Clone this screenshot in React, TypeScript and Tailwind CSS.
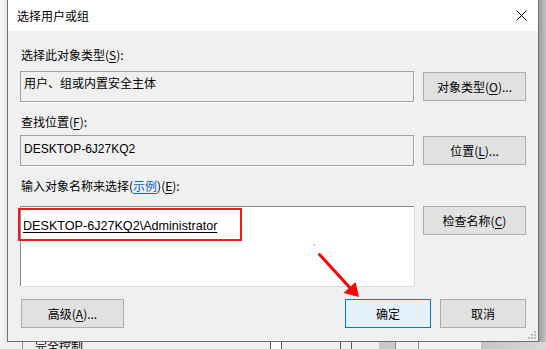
import React from 'react'

const cjk = '"Noto Sans CJK SC", "Noto Sans", sans-serif'
const latin = '"Liberation Sans", "Noto Sans CJK SC", sans-serif'

function Key({ children }: { children: React.ReactNode }) {
  return <span className="underline underline-offset-2">{children}</span>
}

function WinButton({ children, width, primary }: { children: React.ReactNode; width: string; primary?: boolean }) {
  return (
    <div
      className={`flex h-[29px] shrink-0 items-center justify-center border text-[12px] text-black ${width} ${
        primary ? 'border-[#0078d7] bg-[#e5f1fb]' : 'border-[#adadad] bg-[#e1e1e1]'
      }`}
    >
      {children}
    </div>
  )
}

function ReadOnlyBox({ children, top }: { children: React.ReactNode; top: string }) {
  return (
    <div
      className={`h-[31px] w-[394px] border border-[#a0a0a0] bg-[#f0f0f0] pl-[3px] text-[12px] leading-[16px] text-black shadow-[1px_1px_0_#ffffff] ${top}`}
    >
      {children}
    </div>
  )
}

export default function App() {
  return (
    <div className="flex h-[349px] w-[546px] flex-col overflow-hidden bg-[#f0f0f0]" style={{ fontFamily: cjk }}>
      <div className="flex h-[342px] shrink-0">
        {/* desktop strip on the left */}
        <div className="w-[7px] shrink-0 bg-gradient-to-r from-[#f8f8f8] to-[#e6e6e6]" />

        {/* dialog */}
        <div className="relative flex w-[532px] shrink-0 flex-col border-r border-b border-l border-[#717171] bg-[#f0f0f0]">
          <div className="flex h-[31px] shrink-0 items-center justify-between bg-white pl-[9px] pr-[10px]">
            <span className="text-[12px] text-black">选择用户或组</span>
            <svg width="11" height="11" viewBox="0 0 11 11" className="mr-[1px]">
              <path d="M0.5 0.5 L10.5 10.5 M10.5 0.5 L0.5 10.5" stroke="#000" strokeWidth="1" />
            </svg>
          </div>

          <div className="flex flex-col px-[12px]">
            <div className="mt-[16px] h-[16px] pl-[1px] text-[12px] leading-[16px] text-black">
              选择此对象类型(<Key>S</Key>):
            </div>
            <div className="mt-[8px] flex items-center justify-between">
              <ReadOnlyBox top="pt-[3px]">用户、组或内置安全主体</ReadOnlyBox>
              <WinButton width="w-[103px]">
                对象类型(<Key>O</Key>)...
              </WinButton>
            </div>

            <div className="mt-[12px] h-[16px] pl-[1px] text-[12px] leading-[16px] text-black">
              查找位置(<Key>F</Key>):
            </div>
            <div className="mt-[5px] flex items-center justify-between">
              <ReadOnlyBox top="pt-[4px]">
                <span style={{ fontFamily: latin }}>DESKTOP-6J27KQ2</span>
              </ReadOnlyBox>
              <WinButton width="w-[103px]">
                位置(<Key>L</Key>)...
              </WinButton>
            </div>

            <div className="mt-[12px] h-[16px] pl-[1px] text-[12px] leading-[16px] text-black">
              输入对象名称来选择(<span className="text-[#0066cc] underline underline-offset-2">示例</span>)(<Key>E</Key>):
            </div>
            <div className="mt-[12px] flex items-start justify-between">
              <div className="relative h-[80px] w-[394px] border-t border-l border-[#8a8a8a] bg-white pt-[8px] pl-[2px] leading-[16px] shadow-[1px_1px_0_#dcdcdc]">
                <span className="text-[12.6px] text-black underline underline-offset-2" style={{ fontFamily: latin }}>
                  DESKTOP-6J27KQ2\Administrator
                </span>
                {/* red annotation box */}
                <div className="absolute top-[1px] left-[-3px] h-[33px] w-[224px] border-2 border-[#ee1c1c]" />
              </div>
              <WinButton width="w-[103px]">
                检查名称(<Key>C</Key>)
              </WinButton>
            </div>

            <div className="mt-[13px] flex items-center">
              <div className="ml-[1px]">
                <WinButton width="w-[103px]">
                  高级(<Key>A</Key>)...
                </WinButton>
              </div>
              <div className="ml-auto flex gap-[9px]">
                <WinButton width="w-[86px]" primary>
                  确定
                </WinButton>
                <WinButton width="w-[86px]">取消</WinButton>
              </div>
            </div>
          </div>

          {/* resize grip */}
          <svg className="absolute right-[2px] bottom-[2px]" width="8" height="8" viewBox="0 0 8 8">
            <rect x="6" y="0" width="2" height="2" fill="#bcbcbc" />
            <rect x="3" y="3" width="2" height="2" fill="#bcbcbc" />
            <rect x="6" y="3" width="2" height="2" fill="#bcbcbc" />
            <rect x="0" y="6" width="2" height="2" fill="#bcbcbc" />
            <rect x="3" y="6" width="2" height="2" fill="#bcbcbc" />
            <rect x="6" y="6" width="2" height="2" fill="#bcbcbc" />
          </svg>

          {/* red arrow annotation */}
          <svg className="pointer-events-none absolute top-[240px] left-[300px]" width="60" height="62" viewBox="0 0 60 62">
            <circle cx="6" cy="5" r="1" fill="#ff9a9a" />
            <path d="M11.5 14.5 L44 50" stroke="#ff0000" strokeWidth="3" strokeLinecap="round" />
            <path d="M51 57 L35.5 53 L47.5 42 Z" fill="#ff0000" />
          </svg>
        </div>

        {/* shadow on the right */}
        <div className="w-[7px] shrink-0 bg-gradient-to-r from-[#9c9c9c] to-[#c4c4c4]" />
      </div>

      {/* window behind the dialog */}
      <div className="flex h-[7px] shrink-0 bg-[#f0f0f0] text-[12px] leading-[14px] text-black">
        <div className="w-[23px] shrink-0 border-r border-[#8c8c8c]" />
        <div className="w-[247px] shrink-0 overflow-hidden pl-[12px]">
          <span className="block -translate-y-[3px]">完全控制</span>
        </div>
        <div className="w-[12px] shrink-0 border-x border-[#5a5a5a] bg-white" />
        <div className="w-[59px] shrink-0 border-r border-[#5a5a5a]" />
        <div className="w-[11px] shrink-0 border-r border-[#5a5a5a]" />
        <div className="w-[27px] shrink-0" />
        <div className="w-[16px] shrink-0 bg-[#c8c8c8]" />
        <div className="w-[24px] shrink-0 border-r border-l border-[#8c8c8c]" />
        <div className="w-[62px] shrink-0 bg-[#f3f3f3]" />
        <div className="flex-1 bg-gradient-to-r from-[#c4c4c4] to-[#d8d8d8]" />
      </div>
    </div>
  )
}
